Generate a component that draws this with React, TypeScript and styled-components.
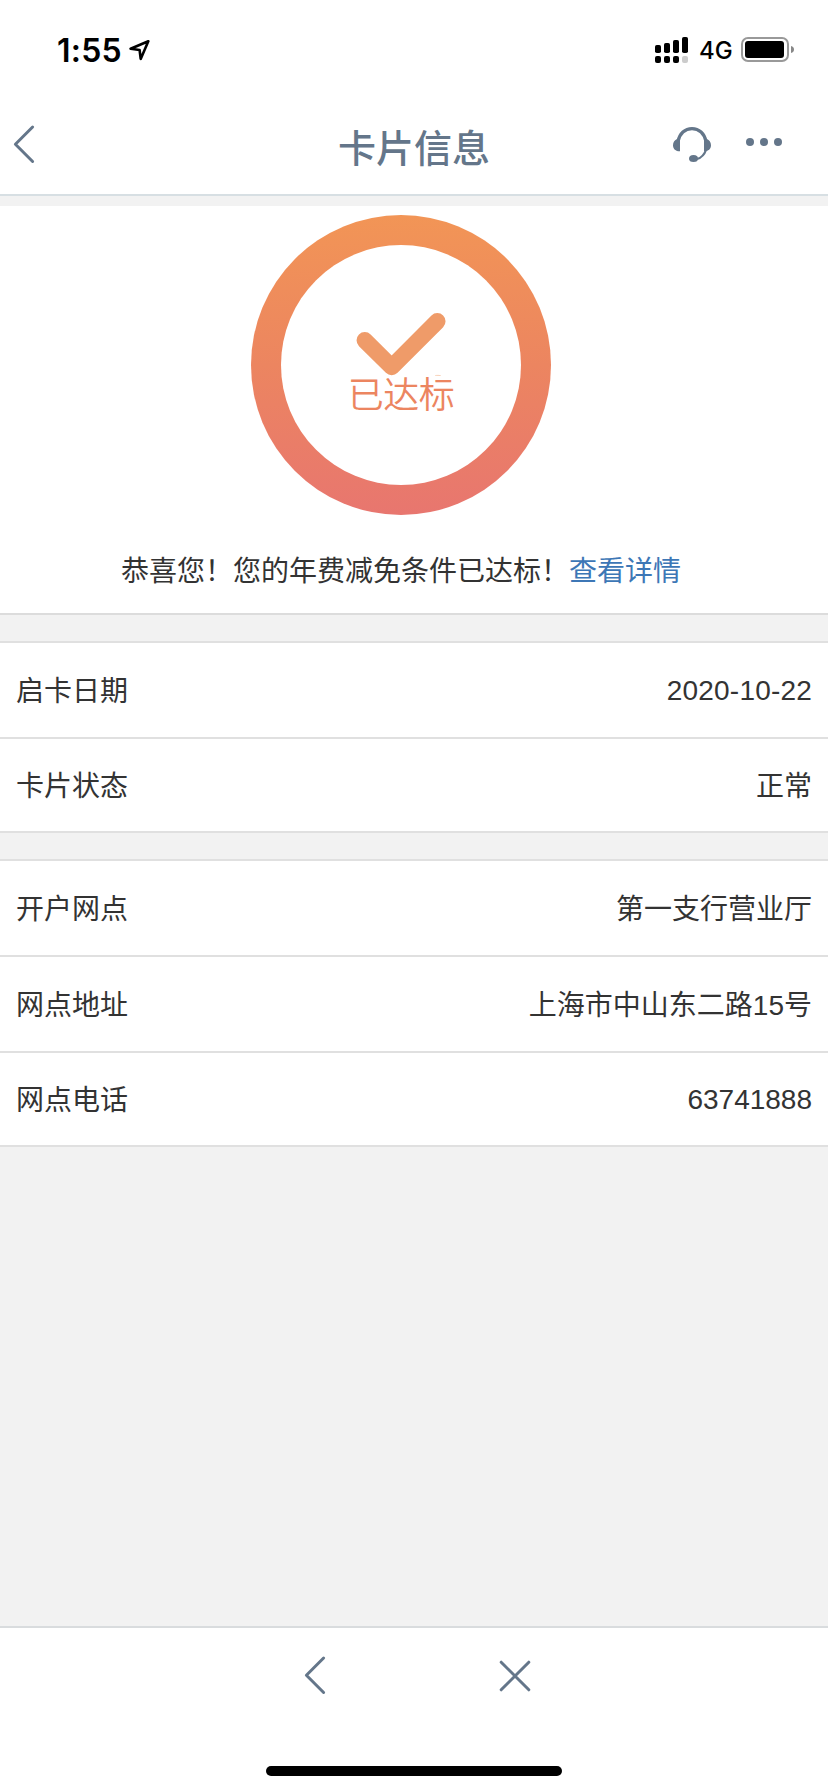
import React from "react";
import styled, { createGlobalStyle } from "styled-components";

const slate = "#64768a";
const line = "#e0e0e0";

const GlobalStyle = createGlobalStyle`
  * { box-sizing: border-box; }
  html, body { margin: 0; padding: 0; background: #f2f2f2; }
  body {
    font-family: "Liberation Sans", "Noto Sans CJK SC", sans-serif;
    font-size: 28px;
    color: #333;
  }
`;

const Screen = styled.div`
  width: 828px;
  height: 1792px;
  display: flex;
  flex-direction: column;
  background: #f2f2f2;
  overflow: hidden;
`;

const StatusBar = styled.header`
  height: 100px;
  flex: none;
  display: flex;
  align-items: center;
  padding: 0 34px 0 57px;
  background: #fff;
  color: #000;
  font-family: Inter, sans-serif;
`;

const Clock = styled.span`
  width: 72px;
  padding-top: 1px;
  font-size: 32px;
  font-weight: 600;
  line-height: 40px;
  letter-spacing: 0.2px;
  white-space: nowrap;
`;

const StatusIcons = styled.div`
  margin-left: auto;
  display: flex;
  align-items: center;
`;

const Network = styled.span`
  width: 33px;
  margin: 2px 9px 0 10px;
  font-size: 24px;
  font-weight: 500;
  line-height: 30px;
  white-space: nowrap;
`;

const NavBar = styled.nav`
  height: 96px;
  flex: none;
  display: grid;
  grid-template-columns: 200px 1fr 200px;
  align-items: start;
  background: #fff;
  border-bottom: 2px solid #d7dfe3;
`;

const IconButton = styled.button`
  display: flex;
  padding: 0;
  border: 0;
  background: none;
  color: ${slate};
`;

const BackButton = styled(IconButton)`
  margin: 24px 0 0 12px;
`;

const Title = styled.h1`
  margin: 21px 0 0;
  font-size: 38px;
  line-height: 56px;
  font-weight: 500;
  text-align: center;
  color: ${slate};
`;

const NavActions = styled.div`
  display: flex;
  align-items: flex-start;
  padding: 27px 0 0 45px;
  gap: 35px;
`;

const MoreButton = styled(IconButton)`
  margin-top: 11px;
`;

const Summary = styled.section`
  height: 409px;
  flex: none;
  margin-top: 10px;
  padding: 9px 26px 0 0;
  display: flex;
  flex-direction: column;
  align-items: center;
  background: #fff;
  border-bottom: 2px solid #dcdcdc;
`;

const Ring = styled.div`
  width: 300px;
  height: 300px;
  flex: none;
  padding: 30px;
  border-radius: 50%;
  background: linear-gradient(#f29556, #ec8560 50%, #e8766f);
`;

const RingCore = styled.div`
  width: 240px;
  height: 240px;
  padding-top: 65px;
  display: flex;
  flex-direction: column;
  align-items: center;
  border-radius: 50%;
  background: #fff;
`;

const RingLabel = styled.span`
  margin-top: -3px;
  font-size: 36px;
  font-weight: 350;
  line-height: 46px;
  letter-spacing: -0.5px;
  color: #ec8560;
`;

const Message = styled.p`
  margin: 37px 0 0;
  line-height: 40px;
  white-space: nowrap;
`;

const DetailLink = styled.a`
  color: #3d77b6;
  text-decoration: none;
`;

const Group = styled.dl`
  margin: 26px 0 0;
  flex: none;
  background: #fff;
  border: solid ${line};
  border-width: 2px 0;
`;

const Row = styled.div`
  height: 96px;
  display: flex;
  align-items: center;
  justify-content: space-between;
  padding: 3px 16px 0;
  line-height: 40px;
  border-bottom: 2px solid ${line};

  &:last-child {
    height: 92px;
    border-bottom: 0;
  }
`;

const Term = styled.dt`
  margin: 0;
`;

const Value = styled.dd<{ $numeric?: boolean; $tracking?: number }>`
  margin: 0;
  padding-bottom: ${(p) => (p.$numeric ? 2 : 0)}px;
  letter-spacing: ${(p) => p.$tracking ?? 0}px;
`;

const BottomBar = styled.footer`
  height: 166px;
  flex: none;
  margin-top: auto;
  display: flex;
  flex-direction: column;
  align-items: center;
  justify-content: space-between;
  padding-bottom: 16px;
  background: #fff;
  border-top: 2px solid #d9dcde;
`;

const BottomActions = styled.div`
  width: 229px;
  margin-left: 7px;
  display: flex;
  align-items: center;
  justify-content: space-between;
  padding-top: 27px;
`;

const CloseButton = styled(IconButton)`
  padding-top: 2px;
`;

const HomeIndicator = styled.div`
  width: 296px;
  height: 10px;
  border-radius: 5px;
  background: #000;
`;

const Chevron = () => (
  <svg width="24" height="40" viewBox="0 0 24 40" fill="none" stroke="currentColor" strokeWidth="3" strokeLinecap="round" strokeLinejoin="round">
    <path d="M20.6 3 3.4 20.3 20.6 37.5" />
  </svg>
);

const Close = () => (
  <svg width="34" height="34" viewBox="0 0 34 34" fill="none" stroke="currentColor" strokeWidth="3" strokeLinecap="round">
    <path d="M3.2 3.2 30.8 30.8M30.8 3.2 3.2 30.8" />
  </svg>
);

const LocationArrow = () => (
  <svg width="22" height="22" viewBox="0 0 22 22" fill="none" stroke="currentColor" strokeWidth="2.6" strokeLinejoin="round">
    <path d="M19.300 2.300 1.600 9.800 10.600 11 11.700 19.900Z" />
  </svg>
);

const Signal = () => (
  <svg width="34" height="26" viewBox="0 0 34 26">
    <rect x="0" y="8" width="6" height="8" rx="1.8" />
    <rect x="9" y="6" width="6" height="10" rx="1.8" />
    <rect x="18" y="3" width="6" height="13" rx="1.8" />
    <rect x="27" y="0" width="6" height="16" rx="1.8" />
    <rect x="0" y="19" width="6" height="7" rx="2" />
    <rect x="9" y="19" width="6" height="7" rx="2" />
    <rect x="18" y="19" width="6" height="7" rx="2" />
    <rect x="27" y="19" width="6" height="7" rx="2" fill="#ccc" />
  </svg>
);

const Battery = () => (
  <svg width="53" height="26" viewBox="0 0 53 26">
    <rect x="1" y="1" width="46" height="23" rx="6" fill="none" stroke="#999" strokeWidth="2" />
    <rect x="4" y="4" width="39" height="17" rx="3" />
    <path d="M50 9Q53 9.6 53 12.5T50 16Z" fill="#888" />
  </svg>
);

const Headset = () => (
  <svg width="38" height="36" viewBox="0 0 38 36" fill="none" stroke="currentColor">
    <path d="M5 14.500C6.500 6.500 12 1.600 19 1.600S31.500 6.500 33 14.500" strokeWidth="3.200" />
    <path d="M33.200 22.500C31.500 27.500 28.500 30.800 24 32" strokeWidth="2.200" />
    <path d="M7 12V24.300C2.500 24.300 0 21.800 0 18.200 0 15.500 1.500 13.300 3.600 12.300ZM31 12V24.300C35.500 24.300 38 21.800 38 18.200 38 15.500 36.500 13.300 34.400 12.300Z" fill="currentColor" stroke="none" />
    <ellipse cx="20.500" cy="31.600" rx="4.500" ry="3.500" fill="currentColor" stroke="none" />
  </svg>
);

const More = () => (
  <svg width="36" height="8" viewBox="0 0 36 8" fill="currentColor">
    <circle cx="4" cy="4" r="4" />
    <circle cx="18" cy="4" r="4" />
    <circle cx="32" cy="4" r="4" />
  </svg>
);

const Check = () => (
  <svg width="92" height="66" viewBox="0 0 92 66" fill="none">
    <path d="M9.8 30.3 36.7 57 82.3 11.300" stroke="#ef9b69" strokeWidth="16.5" strokeLinecap="round" strokeLinejoin="round" />
    <path d="M80 66 81.500 65.400H84L86 66" stroke="#ef9b69" strokeWidth="0.8" opacity="0.6" />
  </svg>
);

type Detail = { term: string; value: string; numeric?: boolean; tracking?: number };

const groups: Detail[][] = [
  [
    { term: "启卡日期", value: "2020-10-22", numeric: true, tracking: 0.2 },
    { term: "卡片状态", value: "正常" },
  ],
  [
    { term: "开户网点", value: "第一支行营业厅" },
    { term: "网点地址", value: "上海市中山东二路15号" },
    { term: "网点电话", value: "63741888", numeric: true },
  ],
];

export default function App() {
  return (
    <Screen>
      <GlobalStyle />
      <StatusBar>
        <Clock>1:55</Clock>
        <LocationArrow />
        <StatusIcons>
          <Signal />
          <Network>4G</Network>
          <Battery />
        </StatusIcons>
      </StatusBar>
      <NavBar>
        <BackButton aria-label="返回"><Chevron /></BackButton>
        <Title>卡片信息</Title>
        <NavActions>
          <IconButton aria-label="客服"><Headset /></IconButton>
          <MoreButton aria-label="更多"><More /></MoreButton>
        </NavActions>
      </NavBar>
      <Summary>
        <Ring>
          <RingCore>
            <Check />
            <RingLabel>已达标</RingLabel>
          </RingCore>
        </Ring>
        <Message>
          恭喜您！您的年费减免条件已达标！<DetailLink>查看详情</DetailLink>
        </Message>
      </Summary>
      {groups.map((rows, i) => (
        <Group key={i}>
          {rows.map(({ term, value, numeric, tracking }) => (
            <Row key={term}>
              <Term>{term}</Term>
              <Value $numeric={numeric} $tracking={tracking}>{value}</Value>
            </Row>
          ))}
        </Group>
      ))}
      <BottomBar>
        <BottomActions>
          <IconButton aria-label="后退"><Chevron /></IconButton>
          <CloseButton aria-label="关闭"><Close /></CloseButton>
        </BottomActions>
        <HomeIndicator />
      </BottomBar>
    </Screen>
  );
}
